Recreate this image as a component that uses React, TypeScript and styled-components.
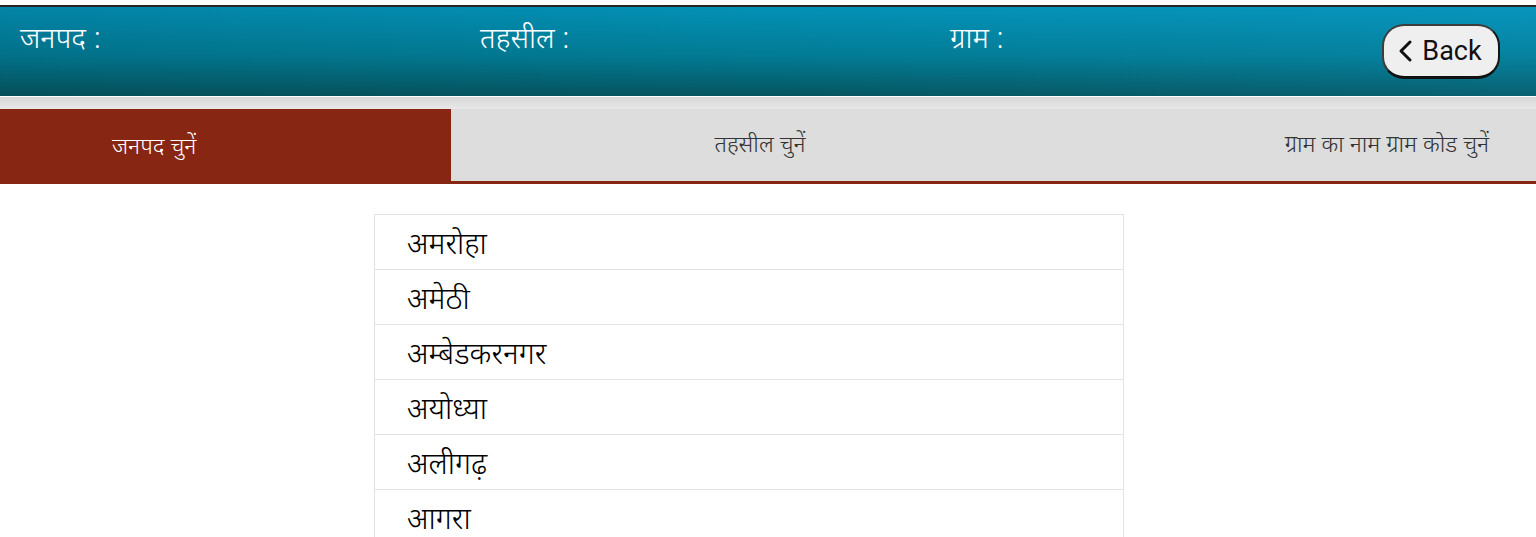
import styled, { createGlobalStyle } from "styled-components";

const GlobalStyle = createGlobalStyle`
    body {
        margin: 0;
        background: #fff;
        font-family: "Noto Sans", "Noto Sans Devanagari", "Lohit Devanagari", sans-serif;
    }
`

const HINDI = `"Noto Sans", "Noto Sans Devanagari", "Lohit Devanagari", sans-serif`;

const Page = styled.div`
    padding-top: 5px;
    height: 532px;
    overflow: hidden;
`
const Header = styled.header`
    border-top: 2px solid #262626;
    box-sizing: border-box;
    height: 91px;
    display: flex;
    align-items: flex-start;
    padding: 0 36px 0 20px;
    background:
        linear-gradient(to right, rgba(0, 20, 30, 0.1), rgba(0, 0, 0, 0) 50%, rgba(40, 180, 240, 0.12)),
        linear-gradient(to bottom, #0391b6 0%, #027b94 55%, #05555f 100%);
`
const Label = styled.div<{ $w: number }>`
    width: ${(p) => p.$w}px;
    color: #fff;
    font-family: ${HINDI};
    font-size: 29px;
    font-weight: 350;
    line-height: 34px;
    margin-top: 13px;
`
const BackButton = styled.button`
    margin-left: auto;
    margin-top: 17px;
    width: 118px;
    height: 55px;
    border: 2px solid #3d3d3d;
    border-right-color: #151515;
    border-bottom: 3px solid #111;
    border-radius: 22px;
    background: #efefef;
    display: flex;
    align-items: center;
    justify-content: center;
    gap: 6px;
    font-family: Roboto, "Liberation Sans", sans-serif;
    font-size: 27px;
    color: #111;
    padding: 0 4px 0 0;
    svg {
        width: 20px;
        height: 24px;
    }
`
const Band = styled.div`
    border-top: 1px solid #fff;
    height: 12px;
    background: linear-gradient(to bottom, #d6d6d6, #e8e8e8);
`
const Tabs = styled.nav`
    display: grid;
    grid-template-columns: 451px 618px 1fr;
    height: 75px;
    border-bottom: 3px solid #862613;
    box-sizing: border-box;
`
const Tab = styled.div<{ $active?: boolean; $align: "start" | "center" | "end" }>`
    display: flex;
    align-items: center;
    justify-content: ${(p) => (p.$align === "end" ? "flex-end" : p.$align === "start" ? "flex-start" : "center")};
    padding: 0 ${(p) => (p.$align === "end" ? "47px" : "0")} 4px ${(p) => (p.$align === "start" ? "112px" : "0")};
    background: ${(p) => (p.$active ? "#862613" : "#dcdddc")};
    color: ${(p) => (p.$active ? "#fff" : "#333")};
    font-family: ${HINDI};
    font-size: 23px;
    font-weight: 350;
    margin-bottom: ${(p) => (p.$active ? "-3px" : "0")};
`
const List = styled.ul`
    list-style: none;
    margin: 30px 0 0 374px;
    padding: 0;
    width: 750px;
    border: 1px solid #e2e2e8;
    border-bottom: none;
    box-sizing: border-box;
`
const Item = styled.li`
    height: 55px;
    box-sizing: border-box;
    border-bottom: 1px solid #e2e2e8;
    padding-left: 32px;
    display: flex;
    align-items: center;
    font-family: ${HINDI};
    font-size: 30px;
    font-weight: 350;
    color: #000;
`

const districts = ["अमरोहा", "अमेठी", "अम्बेडकरनगर", "अयोध्या", "अलीगढ़", "आगरा"];

const App = () => {
    return (
        <Page>
            <GlobalStyle />
            <Header>
                <Label $w={460}>जनपद :</Label>
                <Label $w={470}>तहसील :</Label>
                <Label $w={300}>ग्राम :</Label>
                <BackButton>
                    <svg viewBox="0 0 20 24" fill="none" stroke="#111" strokeWidth="3" strokeLinecap="round" strokeLinejoin="round">
                        <path d="M14 3 L5 12 L14 21" />
                    </svg>
                    Back
                </BackButton>
            </Header>
            <Band />
            <Tabs>
                <Tab $active $align="start">जनपद चुनें</Tab>
                <Tab $align="center">तहसील चुनें</Tab>
                <Tab $align="end">ग्राम का नाम ग्राम कोड चुनें</Tab>
            </Tabs>
            <List>
                {districts.map((name) => (
                    <Item key={name}>{name}</Item>
                ))}
            </List>
        </Page>
    )
}
export default App
